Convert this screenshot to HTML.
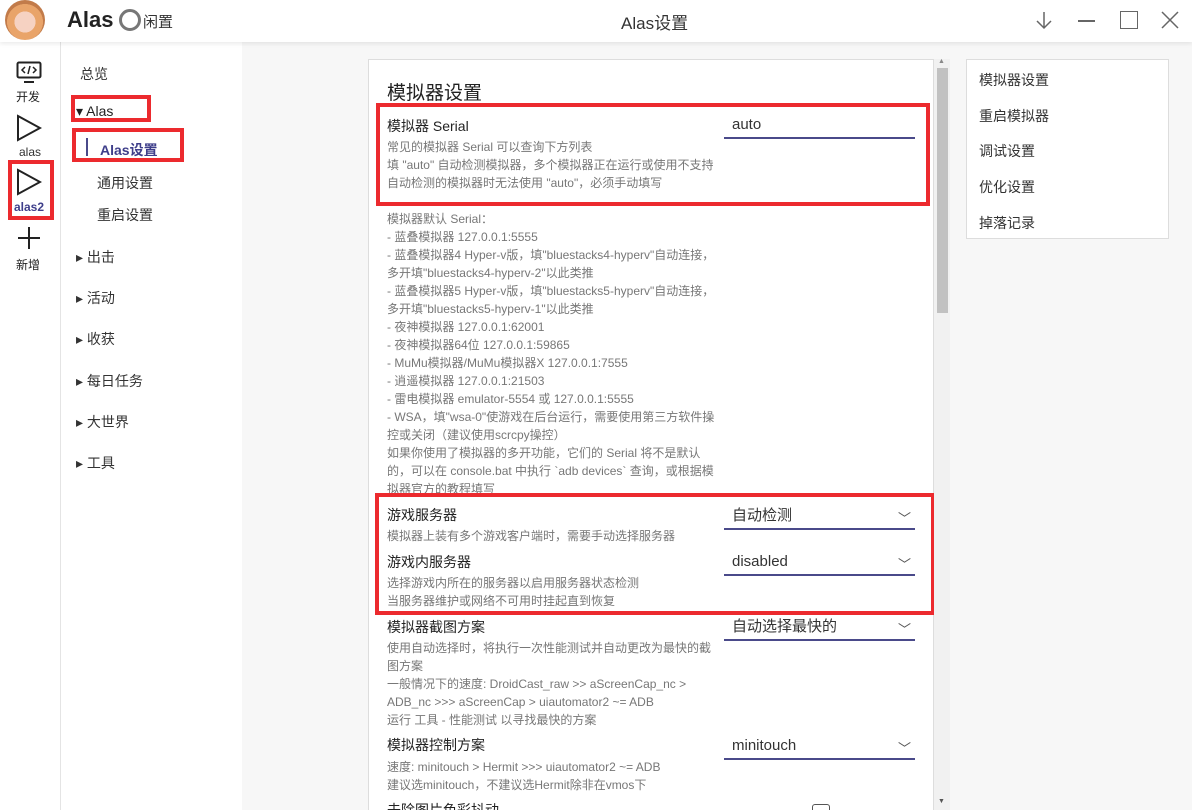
<!DOCTYPE html>
<html style="overflow:hidden;width:1192px;height:810px"><head><meta charset="utf-8"><style>
*{margin:0;padding:0;box-sizing:border-box}
body{width:1192px;height:810px;overflow:hidden;background:#f7f7f7;font-family:"Liberation Sans","Noto Sans CJK SC",sans-serif;position:relative;color:#222}
.a{position:absolute;white-space:nowrap}
.d{font-size:12px;color:#777;line-height:18px}
.t{font-size:14px;color:#222}
.red{position:absolute;border:4px solid #ec2a2e}
.sel{position:absolute;border-bottom:2px solid #4a4a8a;font-size:15px;color:#333;height:26px;padding-left:8px;line-height:24px}
.chev{position:absolute;right:4px;top:3px;font-size:13px;color:#555}
.nav{font-size:14px;color:#333}
</style></head><body>
<div class="a" style="left:0;top:0;width:1192px;height:42px;background:#fff;box-shadow:0 2px 4px rgba(0,0,0,.08);z-index:2">
 <div class="a" style="left:5px;top:0;width:40px;height:40px;border-radius:50%;background:radial-gradient(circle at 50% 55%,#f6d2c2 0 35%,#e9a46a 36% 60%,#c27b4a 61%)"></div>
 <div class="a" style="left:67px;top:7px;font-size:22px;font-weight:bold;color:#222">Alas</div>
 <div class="a" style="left:119px;top:9px;width:22px;height:22px;border:3px solid #777;border-radius:50%"></div>
 <div class="a" style="left:143px;top:11px;font-size:15px;color:#333">闲置</div>
 <div class="a" style="left:621px;top:9px;font-size:17px;color:#333">Alas设置</div>
 <svg class="a" style="left:1034px;top:10px" width="20" height="20"><path d="M10 2v16M3 11l7 7 7-7" fill="none" stroke="#666" stroke-width="1.5"/></svg>
 <div class="a" style="left:1078px;top:20px;width:17px;height:1.5px;background:#666"></div>
 <div class="a" style="left:1120px;top:11px;width:18px;height:18px;border:1.5px solid #666"></div>
 <svg class="a" style="left:1161px;top:11px" width="18" height="18"><path d="M1 1l16 16M17 1L1 17" stroke="#666" stroke-width="1.5"/></svg>
</div>
<div class="a" style="left:0;top:42px;width:61px;height:768px;background:#fff;border-right:1px solid #e4e4e4"></div>
<svg class="a" style="left:16px;top:61px" width="26" height="24" viewBox="0 0 26 24"><rect x="1.5" y="1.5" width="23" height="15" rx="1.5" fill="none" stroke="#222" stroke-width="2"/><path d="M8 21h10" stroke="#222" stroke-width="2"/><path d="M9 6l-3 3 3 3M17 6l3 3-3 3M14 5l-2 8" fill="none" stroke="#222" stroke-width="1.5"/></svg>
<div class="a" style="left:16px;top:88px;font-size:12px">开发</div>
<svg class="a" style="left:16px;top:114px" width="26" height="28"><path d="M2 2L24 14 2 26Z" fill="none" stroke="#222" stroke-width="2"/></svg>
<div class="a" style="left:19px;top:145px;font-size:12px;color:#333">alas</div>
<svg class="a" style="left:16px;top:168px" width="26" height="28"><path d="M2 2L24 14 2 26Z" fill="none" stroke="#222" stroke-width="2"/></svg>
<div class="a" style="left:14px;top:200px;font-size:12px;color:#3e3e8a;font-weight:bold">alas2</div>
<div class="red" style="left:8px;top:160px;width:46px;height:60px"></div>
<div class="a" style="left:18px;top:237px;width:22px;height:2px;background:#222"></div>
<div class="a" style="left:28px;top:227px;width:2px;height:22px;background:#222"></div>
<div class="a" style="left:16px;top:256px;font-size:12px">新增</div>
<div class="a" style="left:61px;top:42px;width:181px;height:768px;background:#fff"></div>
<div class="a nav" style="left:80px;top:64px">总览</div>
<div class="a nav" style="left:76px;top:103px;color:#222">▾ Alas</div>
<div class="red" style="left:71px;top:95px;width:80px;height:27px"></div>
<div class="a" style="left:86px;top:138px;width:2px;height:18px;background:#4a4a8a"></div>
<div class="a nav" style="left:100px;top:140px;color:#3e3e8a;font-weight:bold">Alas设置</div>
<div class="red" style="left:72px;top:128px;width:112px;height:34px"></div>
<div class="a nav" style="left:97px;top:173px">通用设置</div>
<div class="a nav" style="left:97px;top:205px">重启设置</div>
<div class="a nav" style="left:76px;top:247px">▸ 出击</div>
<div class="a nav" style="left:76px;top:288px">▸ 活动</div>
<div class="a nav" style="left:76px;top:329px">▸ 收获</div>
<div class="a nav" style="left:76px;top:371px">▸ 每日任务</div>
<div class="a nav" style="left:76px;top:412px">▸ 大世界</div>
<div class="a nav" style="left:76px;top:453px">▸ 工具</div>
<div class="a" style="left:368px;top:59px;width:566px;height:751px;background:#fff;border:1px solid #ddd;border-bottom:none"></div>
<div class="a" style="left:387px;top:78px;font-size:19px;color:#222">模拟器设置</div>
<div class="a t" style="left:387px;top:116px;color:#222">模拟器 Serial</div>
<div class="sel" style="left:724px;top:113px;width:191px">auto</div>
<div class="a d" style="left:387px;top:138px">常见的模拟器 Serial 可以查询下方列表<br>填 "auto" 自动检测模拟器，多个模拟器正在运行或使用不支持<br>自动检测的模拟器时无法使用 "auto"，必须手动填写</div>
<div class="red" style="left:376px;top:103px;width:554px;height:103px"></div>
<div class="a d" style="left:387px;top:210px">模拟器默认 Serial：<br>- 蓝叠模拟器 127.0.0.1:5555<br>- 蓝叠模拟器4 Hyper-v版，填"bluestacks4-hyperv"自动连接，<br>多开填"bluestacks4-hyperv-2"以此类推<br>- 蓝叠模拟器5 Hyper-v版，填"bluestacks5-hyperv"自动连接，<br>多开填"bluestacks5-hyperv-1"以此类推<br>- 夜神模拟器 127.0.0.1:62001<br>- 夜神模拟器64位 127.0.0.1:59865<br>- MuMu模拟器/MuMu模拟器X 127.0.0.1:7555<br>- 逍遥模拟器 127.0.0.1:21503<br>- 雷电模拟器 emulator-5554 或 127.0.0.1:5555<br>- WSA，填"wsa-0"使游戏在后台运行，需要使用第三方软件操<br>控或关闭（建议使用scrcpy操控）<br>如果你使用了模拟器的多开功能，它们的 Serial 将不是默认<br>的，可以在 console.bat 中执行 `adb devices` 查询，或根据模<br>拟器官方的教程填写</div>
<div class="a t" style="left:387px;top:505px">游戏服务器</div>
<div class="sel" style="left:724px;top:504px;width:191px">自动检测<span class="chev">﹀</span></div>
<div class="a d" style="left:387px;top:527px">模拟器上装有多个游戏客户端时，需要手动选择服务器</div>
<div class="a t" style="left:387px;top:552px">游戏内服务器</div>
<div class="sel" style="left:724px;top:550px;width:191px">disabled<span class="chev">﹀</span></div>
<div class="a d" style="left:387px;top:574px">选择游戏内所在的服务器以启用服务器状态检测<br>当服务器维护或网络不可用时挂起直到恢复</div>
<div class="red" style="left:375px;top:493px;width:560px;height:122px"></div>
<div class="a t" style="left:387px;top:617px">模拟器截图方案</div>
<div class="sel" style="left:724px;top:615px;width:191px">自动选择最快的<span class="chev">﹀</span></div>
<div class="a d" style="left:387px;top:639px">使用自动选择时，将执行一次性能测试并自动更改为最快的截<br>图方案<br>一般情况下的速度: DroidCast_raw &gt;&gt; aScreenCap_nc &gt;<br>ADB_nc &gt;&gt;&gt; aScreenCap &gt; uiautomator2 ~= ADB<br>运行 工具 - 性能测试 以寻找最快的方案</div>
<div class="a t" style="left:387px;top:735px">模拟器控制方案</div>
<div class="sel" style="left:724px;top:734px;width:191px">minitouch<span class="chev">﹀</span></div>
<div class="a d" style="left:387px;top:758px">速度: minitouch &gt; Hermit &gt;&gt;&gt; uiautomator2 ~= ADB<br>建议选minitouch，不建议选Hermit除非在vmos下</div>
<div class="a t" style="left:387px;top:800px">去除图片色彩抖动</div>
<div class="a" style="left:812px;top:804px;width:18px;height:18px;border:1px solid #555;border-radius:3px"></div>
<div class="a" style="left:934px;top:59px;width:16px;height:751px;background:#f1f1f1"></div>
<div class="a" style="left:937px;top:68px;width:11px;height:245px;background:#c1c1c1"></div>
<div class="a" style="left:938px;top:58px;font-size:7px;color:#888">▲</div>
<div class="a" style="left:938px;top:798px;font-size:7px;color:#555">▼</div>
<div class="a" style="left:966px;top:59px;width:203px;height:180px;background:#fff;border:1px solid #ddd"></div>
<div class="a nav" style="left:979px;top:70px">模拟器设置</div>
<div class="a nav" style="left:979px;top:106px">重启模拟器</div>
<div class="a nav" style="left:979px;top:141px">调试设置</div>
<div class="a nav" style="left:979px;top:177px">优化设置</div>
<div class="a nav" style="left:979px;top:213px">掉落记录</div>
</body></html>
